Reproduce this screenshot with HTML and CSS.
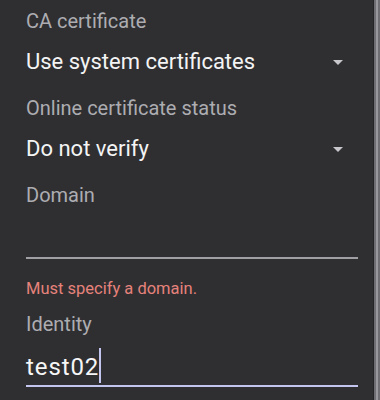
FILE: index.html
```html
<!DOCTYPE html>
<html lang="en">
<head>
    <meta charset="UTF-8">
    <meta name="viewport" content="width=device-width, initial-scale=1.0">
    <title>Network settings</title>
    <link rel="stylesheet" href="styles.css">
</head>
<body>
    <div class="page">
        <div class="form">
            <div class="label first">CA certificate</div>
            <div class="select">
                <span>Use system certificates</span>
                <span class="arrow"></span>
            </div>

            <div class="label">Online certificate status</div>
            <div class="select">
                <span>Do not verify</span>
                <span class="arrow"></span>
            </div>

            <div class="label">Domain</div>
            <div class="input"></div>
            <div class="error">Must specify a domain.</div>

            <div class="label identity">Identity</div>
            <div class="input focused">
                <span class="value">test02</span><span class="cursor"></span>
            </div>
        </div>
        <div class="scrollbar"></div>
    </div>
</body>
</html>
```

FILE: styles.css
```css
body {
    margin: 0;
    padding: 0;
    background-color: #2f2f32;
    font-family: Roboto, "Noto Sans", sans-serif;
}
.page {
    display: flex;
    height: 400px;
    overflow: hidden;
}
.form {
    flex: 1;
    padding: 0 15px 0 26px;
}
.label {
    font-size: 20px;
    line-height: 24px;
    color: #adadb1;
    margin-top: 20px;
    white-space: nowrap;
}
.label.first {
    margin-top: 9px;
}
.label.identity {
    margin-top: 13px;
}
.select {
    display: flex;
    align-items: center;
    justify-content: space-between;
    margin-top: 15px;
    height: 28px;
    font-size: 22px;
    line-height: 28px;
    color: #f4f4f4;
    white-space: nowrap;
}
.arrow {
    width: 0;
    height: 0;
    margin-right: 15px;
    border-left: 5px solid transparent;
    border-right: 5px solid transparent;
    border-top: 5px solid #c8c8cc;
}
.input {
    height: 50px;
    border-bottom: 2px solid #a0a0a4;
}
.input.focused {
    display: flex;
    align-items: flex-end;
    height: 49px;
    color: #f6f6f6;
    border-bottom-color: #c4c5ee;
}
.value {
    font-size: 24px;
    line-height: 28px;
    letter-spacing: 0.9px;
    padding-bottom: 4px;
}
.cursor {
    width: 2px;
    height: 35px;
    margin-bottom: 2px;
    background-color: #c4c5ee;
}
.error {
    margin-top: 20px;
    font-size: 16.5px;
    line-height: 20px;
    color: #e6827a;
}
.scrollbar {
    width: 6px;
    border-left: 1px solid #242426;
    background: linear-gradient(to right, #6e6e72 0 2px, #98989c 2px 4px, #6e6e72 4px);
}
```
